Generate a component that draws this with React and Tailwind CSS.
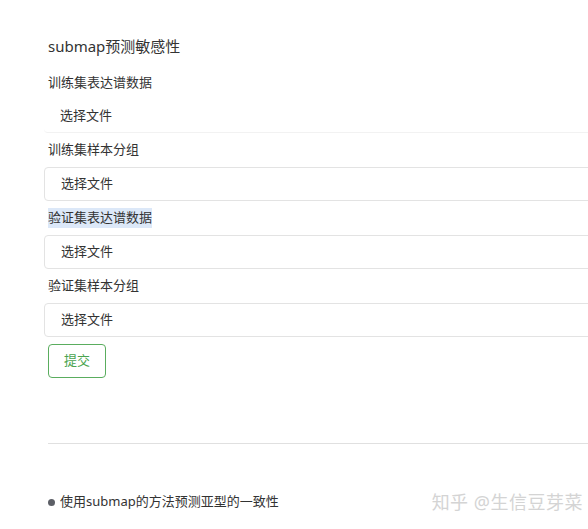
const font = { fontFamily: '"Noto Sans", "Noto Sans CJK SC", sans-serif' };

function FileBox({ bordered = true }) {
  return (
    <div
      className={[
        "h-[34px] w-[600px] ml-[-4px] flex items-center pl-4 text-[13px] text-[#333] rounded-l-[4px]",
        bordered ? "border border-[#e3e3e3]" : "border-b border-[#f2f2f2]"
      ].join(" ")}
    >
      选择文件
    </div>
  );
}

function Label({ children, highlight = false }) {
  return (
    <div className="h-[34px] flex items-center text-[13px] text-[#333]">
      <span className={highlight ? "bg-[#dce8f8]" : ""}>{children}</span>
    </div>
  );
}

export default function App() {
  return (
    <div className="w-[588px] h-[529px] overflow-hidden bg-white" style={font}>
      <div className="pl-12 pt-[34px]">
        <h2 className="text-[15px] leading-[24px] text-[#333] font-normal">
          submap预测敏感性
        </h2>
        <div className="mt-[13px] h-[24px] flex items-center text-[13px] text-[#333]">
          训练集表达谱数据
        </div>
        <div className="mt-[4px]">
          <FileBox bordered={false} />
        </div>
        <Label>训练集样本分组</Label>
        <FileBox />
        <Label highlight>验证集表达谱数据</Label>
        <FileBox />
        <Label>验证集样本分组</Label>
        <FileBox />
        <button className="mt-[7px] w-[58px] h-[34px] rounded-[4px] border border-[#5aad5e] text-[#4aa44f] text-[13px] flex items-center justify-center">
          提交
        </button>
        <div className="mt-[65px] border-t border-[#e0e0e0]" />
        <div className="mt-[48px] h-[20px] flex items-center justify-between pr-[5px]">
          <div className="flex items-center text-[13px] text-[#333]">
            <span className="w-[7px] h-[7px] rounded-full bg-[#5c5f66] mr-[5px]" />
            使用submap的方法预测亚型的一致性
          </div>
          <div className="text-[18px] text-[#d4d4d4] tracking-[0.5px]">知乎 @生信豆芽菜</div>
        </div>
      </div>
    </div>
  );
}
